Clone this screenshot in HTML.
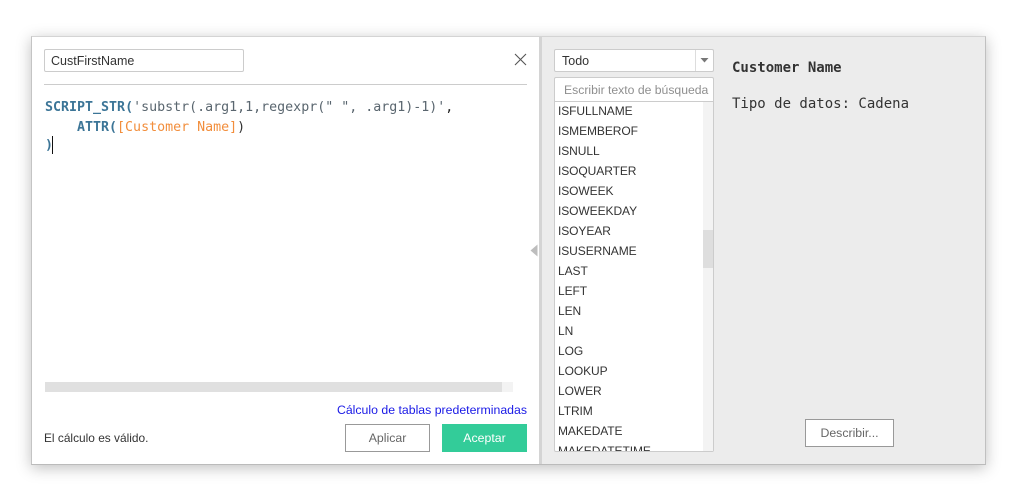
<!DOCTYPE html>
<html>
<head>
<meta charset="utf-8">
<style>
html,body{margin:0;padding:0;background:#fff;width:1014px;height:494px;overflow:hidden}
*{box-sizing:border-box}
.a{position:absolute;white-space:nowrap}
body{font-family:"Liberation Sans",sans-serif;font-size:12px;color:#333}
#panel{left:31px;top:36px;width:955px;height:429px;background:#ececec;border:1px solid #c4c4c4;border-top-color:#d4d4d4;border-bottom-color:#bbb;border-right-color:#c0c0c0;box-shadow:0 3px 14px rgba(0,0,0,.25)}
.mono{font-family:"DejaVu Sans Mono","Liberation Mono",monospace}
.code{font-size:13.3px;line-height:20px;color:#5a666f}
.fn{font-weight:bold;color:#3c7597}
.fld{color:#f28e3c}
.item{left:558px;font-size:12px;line-height:20px;color:#333;letter-spacing:-.08px}
</style>
</head>
<body>
<div id="panel" class="a"></div>
<div class="a" style="left:32px;top:37px;width:507px;height:427px;background:#fff"></div>
<div class="a" style="left:539px;top:37px;width:3px;height:427px;background:#d4d4d4"></div>

<div class="a" style="left:44px;top:49px;width:200px;height:23px;background:#fff;border:1px solid #ccc;border-radius:2px;padding-left:6px;line-height:22px;font-size:12.5px;color:#333">CustFirstName</div>
<svg class="a" style="left:514px;top:53px" width="13" height="13" viewBox="0 0 13 13"><path d="M1 1L12 12M12 1L1 12" stroke="#555" stroke-width="1.1" fill="none"/></svg>
<div class="a" style="left:44px;top:84px;width:483px;height:1px;background:#ccc"></div>

<div class="a mono code" style="left:45px;top:98px"><span class="fn">SCRIPT_STR</span><b style="color:#3c7597">(</b>'substr(.arg1,1,regexpr(" ", .arg1)-1)'<span style="color:#222">,</span></div>
<div class="a mono code" style="left:77px;top:118px"><span class="fn">ATTR</span><b style="color:#3c7597">(</b><span class="fld">[Customer Name]</span><span style="color:#333">)</span></div>
<div class="a mono code" style="left:45px;top:136px"><b style="color:#3c7597">)</b></div>
<div class="a" style="left:52px;top:136px;width:1px;height:18px;background:#111"></div>

<div class="a" style="left:45px;top:382px;width:468px;height:10px;background:#f3f3f3"></div>
<div class="a" style="left:45px;top:382px;width:457px;height:10px;background:#e0e0e0"></div>

<div class="a" style="right:487px;top:402px;color:#1a1ae6;font-size:12.3px;line-height:16px">Cálculo de tablas predeterminadas</div>
<div class="a" style="left:44px;top:430px;font-size:11.9px;line-height:16px;color:#333">El cálculo es válido.</div>
<div class="a" style="left:345px;top:424px;width:85px;height:28px;background:#fff;border:1px solid #999;text-align:center;line-height:26px;color:#666;font-size:12.3px">Aplicar</div>
<div class="a" style="left:442px;top:424px;width:85px;height:28px;background:#33cc99;text-align:center;line-height:28px;color:#fff;font-size:12.3px">Aceptar</div>

<svg class="a" style="left:530px;top:244px" width="8" height="13" viewBox="0 0 8 13"><path d="M7.5 0.5V12.5L0.5 6.5Z" fill="#bdbdbd"/></svg>

<div class="a" style="left:554px;top:49px;width:160px;height:23px;background:#fff;border:1px solid #ccc;border-radius:2px;padding-left:7px;line-height:22px;font-size:12.5px;color:#333">Todo</div>
<div class="a" style="left:695px;top:50px;width:1px;height:21px;background:#ddd"></div>
<svg class="a" style="left:700px;top:58px" width="9" height="5" viewBox="0 0 9 5"><path d="M0.5 0H8.5L4.5 4.5Z" fill="#777"/></svg>

<div class="a" style="left:554px;top:77px;width:160px;height:375px;background:#fff;border:1px solid #ccc;border-radius:2px"></div>
<div class="a" style="left:703px;top:102px;width:10px;height:349px;background:#f3f3f3"></div>
<div class="a" style="left:703px;top:230px;width:10px;height:38px;background:#dedede"></div>
<div class="a" style="left:555px;top:101px;width:158px;height:1px;background:#ccc"></div>
<div class="a" style="left:564px;top:82px;font-size:12.2px;line-height:16px;color:#8f8f8f">Escribir texto de búsqueda</div>

<div class="a" style="left:555px;top:102px;width:148px;height:349px;overflow:hidden">
<div class="a item" style="left:3px;top:-1px">ISFULLNAME</div>
<div class="a item" style="left:3px;top:19px">ISMEMBEROF</div>
<div class="a item" style="left:3px;top:39px">ISNULL</div>
<div class="a item" style="left:3px;top:59px">ISOQUARTER</div>
<div class="a item" style="left:3px;top:79px">ISOWEEK</div>
<div class="a item" style="left:3px;top:99px">ISOWEEKDAY</div>
<div class="a item" style="left:3px;top:119px">ISOYEAR</div>
<div class="a item" style="left:3px;top:139px">ISUSERNAME</div>
<div class="a item" style="left:3px;top:159px">LAST</div>
<div class="a item" style="left:3px;top:179px">LEFT</div>
<div class="a item" style="left:3px;top:199px">LEN</div>
<div class="a item" style="left:3px;top:219px">LN</div>
<div class="a item" style="left:3px;top:239px">LOG</div>
<div class="a item" style="left:3px;top:259px">LOOKUP</div>
<div class="a item" style="left:3px;top:279px">LOWER</div>
<div class="a item" style="left:3px;top:299px">LTRIM</div>
<div class="a item" style="left:3px;top:319px">MAKEDATE</div>
<div class="a item" style="left:3px;top:339px">MAKEDATETIME</div>
</div>

<div class="a mono" style="left:732px;top:59px;font-size:14px;line-height:18px;font-weight:bold;color:#333">Customer Name</div>
<div class="a mono" style="left:732px;top:95px;font-size:14px;line-height:18px;color:#333">Tipo de datos: Cadena</div>

<div class="a" style="left:805px;top:419px;width:89px;height:28px;background:#fff;border:1px solid #999;text-align:center;line-height:26px;color:#666;font-size:12.3px">Describir...</div>
</body>
</html>
